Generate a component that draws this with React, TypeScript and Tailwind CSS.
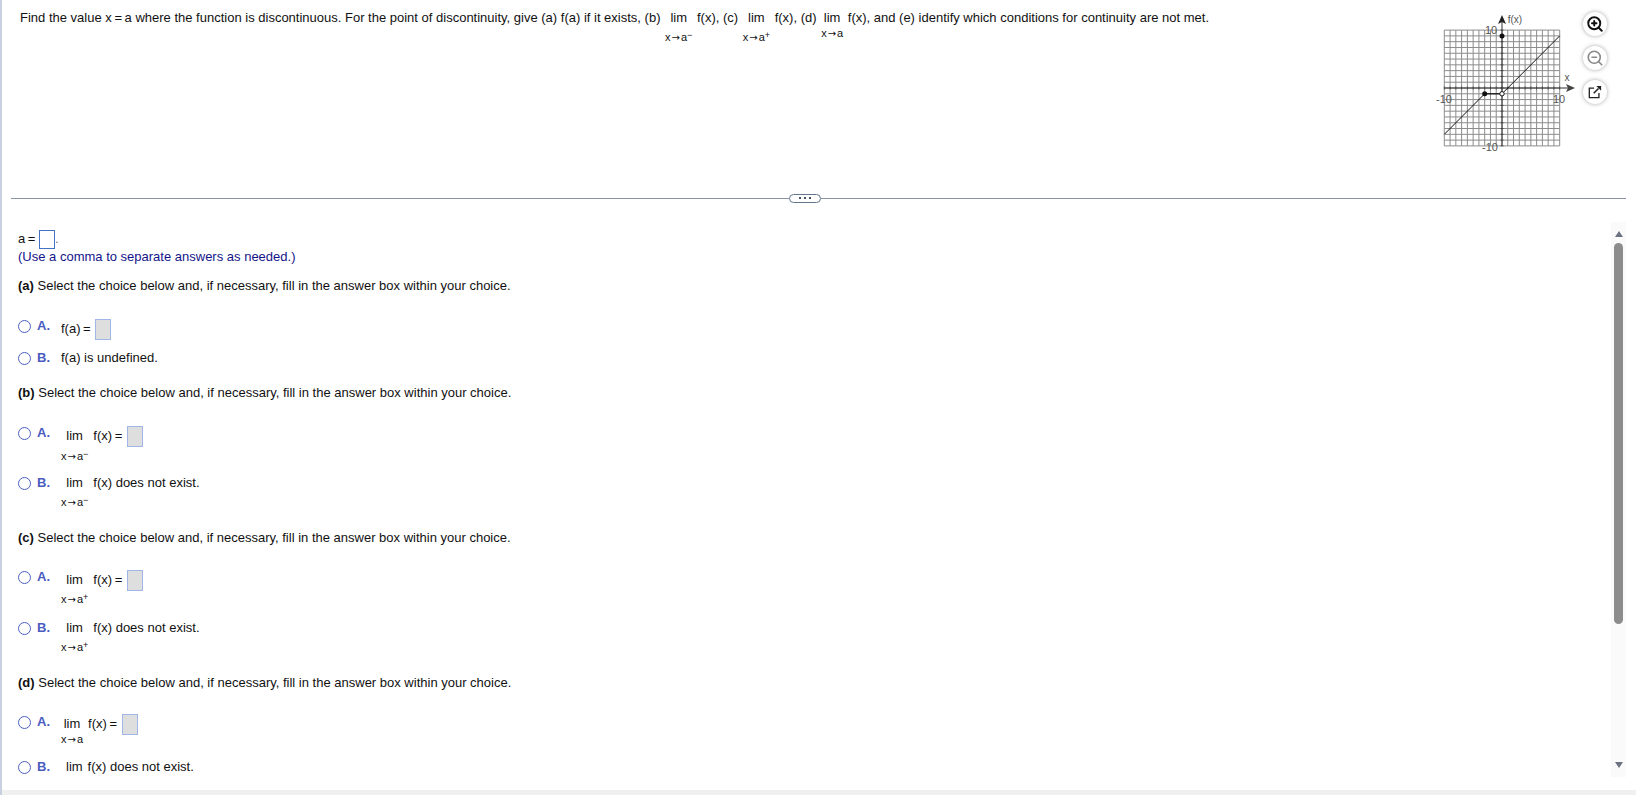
import React from 'react'
import { ZoomIn, ZoomOut } from 'lucide-react'

const cells = Array.from({ length: 21 }, (_, i) => i)
const gx = (v: number) => 1502 + v * 5.77
const gy = (v: number) => 88 - v * 5.79

const Graph = () => (
  <svg viewBox="1420 5 160 155" className="w-[160px] h-[155px] shrink-0 mt-[5px]" fontFamily="'Liberation Sans', Arial, sans-serif">
    {cells.map((i) => (
      <g key={i} stroke="#8c8c8c" strokeWidth="1">
        <line x1={gx(i - 10)} x2={gx(i - 10)} y1={gy(10)} y2={gy(-10)} />
        <line x1={gx(-10)} x2={gx(10)} y1={gy(i - 10)} y2={gy(i - 10)} />
      </g>
    ))}
    <g stroke="#333" strokeWidth="1">
      <line x1={gx(-10)} x2="1570" y1={gy(0)} y2={gy(0)} />
      <line x1={gx(0)} x2={gx(0)} y1="22" y2={gy(-10)} />
      {cells.map((i) => (
        <g key={i} strokeWidth="0.7">
          <line x1={gx(i - 10)} x2={gx(i - 10)} y1={gy(0) - 1.5} y2={gy(0) + 1.5} />
          <line x1={gx(0) - 1.5} x2={gx(0) + 1.5} y1={gy(i - 10)} y2={gy(i - 10)} />
        </g>
      ))}
    </g>
    <path d="M1502 15 L1506 24 L1502 22 L1498 24 Z" fill="#222" />
    <path d="M1575 88 L1566 84 L1568 88 L1566 92 Z" fill="#444" />
    <g stroke="#111" strokeWidth="1" fill="none">
      <line x1={gx(-10)} y1={gy(-8)} x2={gx(-3)} y2={gy(-1)} />
      <line x1={gx(-3)} y1={gy(-1)} x2={gx(0)} y2={gy(-1)} strokeWidth="1.3" />
      <line x1={gx(0)} y1={gy(-1)} x2={gx(10)} y2={gy(9)} />
    </g>
    <circle cx={gx(-3)} cy={gy(-1)} r="2.5" fill="#111" />
    <circle cx={gx(0)} cy={gy(9)} r="2.5" fill="#111" />
    <circle cx={gx(0)} cy={gy(-1)} r="2.2" fill="#fff" stroke="#111" strokeWidth="1" />
    <g fontSize="11" fill="#555">
      <text x="1491" y="34" textAnchor="middle">10</text>
      <text x="1444" y="103" textAnchor="middle">-10</text>
      <text x="1559" y="103" textAnchor="middle">10</text>
      <text x="1490" y="151" textAnchor="middle">-10</text>
      <text x="1567" y="81" textAnchor="middle" fontSize="10">x</text>
      <text x="1515" y="23" textAnchor="middle" fontSize="10">f(x)</text>
    </g>
  </svg>
)

const RoundButton = ({ children }: { children: React.ReactNode }) => (
  <div className="w-[24px] h-[24px] rounded-full bg-white shadow-[0_0_4px_rgba(0,0,0,0.35)] flex items-center justify-center">
    {children}
  </div>
)

const Arrow = () => <span className="font-['DejaVu_Sans',sans-serif] text-[10px] mx-[1px]">→</span>

const TopLim = ({ sign }: { sign?: string }) => (
  <span className="inline-flex flex-col items-center align-baseline mx-[1px]">
    <span className="leading-[16px]">lim</span>
    <span className={`text-[11px] leading-[12px] whitespace-nowrap ${sign ? 'mt-[5px]' : 'mt-[1px]'}`}>
      x<Arrow />a{sign && <sup className="text-[9px] -top-[3px]">{sign}</sup>}
    </span>
  </span>
)

const Lim = ({ sign, subGap }: { sign?: string; subGap: string }) => (
  <span className="flex shrink-0 flex-col items-center">
    <span className="leading-[16px] h-[16px]">lim</span>
    <span className={`text-[11px] leading-[12px] whitespace-nowrap ${subGap}`}>
      x<Arrow />a{sign && <sup className="text-[9px] -top-[3px]">{sign}</sup>}
    </span>
  </span>
)

const Radio = () => <span className="w-[13px] h-[13px] rounded-full border-[1.5px] border-[#4a5fc1] bg-white shrink-0" />

const AnswerBox = () => <span className="inline-block w-[16px] h-[21px] bg-[#dedede] border border-[#9fb6e6] ml-[2px]" />

const Choice = ({ letter, className, children }: { letter: string; className: string; children: React.ReactNode }) => (
  <div className={`flex items-start ${className}`}>
    <div className="flex items-center gap-[6px] h-[16px] w-[43px] shrink-0">
      <Radio />
      <span className="font-bold text-[#4a5cc0]">{letter}.</span>
    </div>
    {children}
  </div>
)

const Part = ({ tag, className }: { tag: string; className: string }) => (
  <p className={`leading-[16px] ${className}`}>
    <b>({tag})</b> Select the choice below and, if necessary, fill in the answer box within your choice.
  </p>
)

const LimChoice = ({ letter, sign, exists, className, subGap, pad }: { letter: string; sign?: string; exists?: boolean; className: string; subGap: string; pad?: string }) => (
  <Choice letter={letter} className={className}>
    <div className={`flex items-start gap-[5px] ${pad ?? ''}`}>
      <Lim sign={sign} subGap={subGap} />
      {exists ? (
        <span className="leading-[16px]">f(x) does not exist.</span>
      ) : (
        <span className="flex items-center h-[16px]">f(x)&thinsp;=&thinsp;<AnswerBox /></span>
      )}
    </div>
  </Choice>
)

export default function App() {
  return (
    <div className="h-screen w-full overflow-hidden flex flex-col bg-white border-l-2 border-[#c9d0e2] text-[#111] font-['Liberation_Sans',Arial,sans-serif]">
      <div className="h-[190px] shrink-0 flex">
        <div className="flex-1 pl-[18px] pt-[10px] text-[13px] leading-[16px]">
          Find the value x&thinsp;=&thinsp;a where the function is discontinuous. For the point of discontinuity, give (a) f(a) if it exists, (b) <TopLim sign="−" /> f(x), (c) <TopLim sign="+" /> f(x), (d) <TopLim /> f(x), and (e) identify which conditions for continuity are not met.
        </div>
        <Graph />
        <div className="w-[24px] ml-[3px] mr-[29px] mt-[12px] flex flex-col gap-[10px] shrink-0">
          <RoundButton><ZoomIn size={18} strokeWidth={2.6} color="#111" /></RoundButton>
          <RoundButton><ZoomOut size={18} strokeWidth={2.2} color="#8a8a8a" /></RoundButton>
          <RoundButton>
            <svg viewBox="0 0 16 16" className="w-[14px] h-[14px]" fill="none">
              <path d="M7 3.5H1.5v11h11V9" stroke="#222" strokeWidth="1.5" />
              <path d="M6.5 9.5 12 4" stroke="#222" strokeWidth="1.8" />
              <path d="M9.5 1H15v5.5Z" fill="#222" />
            </svg>
          </RoundButton>
        </div>
      </div>

      <div className="h-[16px] shrink-0 flex items-center pl-[9px] pr-[10px]">
        <div className="w-[778px] h-px bg-[#8a94a8]" />
        <div className="w-[32px] h-[9px] rounded-full border border-[#64748b] bg-white flex items-center justify-center gap-[3px]">
          <span className="w-[2px] h-[2px] bg-[#475569]" />
          <span className="w-[2px] h-[2px] bg-[#475569]" />
          <span className="w-[2px] h-[2px] bg-[#475569]" />
        </div>
        <div className="flex-1 h-px bg-[#8a94a8]" />
      </div>

      <div className="flex-1 min-h-0 flex">
        <div className="flex-1 min-w-0 overflow-hidden pl-[16px] text-[13px]">
          <div className="flex items-center h-[20px] mt-[23px]">
            a&thinsp;=&thinsp;<span className="w-[16px] h-[19px] border border-[#4472c4] bg-white ml-[1px]" />
            <span className="text-[#777]">.</span>
          </div>
          <p className="leading-[16px] text-[#14148a]">(Use a comma to separate answers as needed.)</p>
          <Part tag="a" className="mt-[13px]" />

          <Choice letter="A" className="mt-[24px] h-[32px]">
            <span className="flex items-center h-[22px]">f(a)&thinsp;=&thinsp;<AnswerBox /></span>
          </Choice>
          <Choice letter="B" className="h-[16px]">
            <span className="leading-[16px]">f(a) is undefined.</span>
          </Choice>

          <Part tag="b" className="mt-[19px]" />
          <LimChoice letter="A" sign="−" pad="pt-[3px]" subGap="mt-[6px]" className="mt-[24px] h-[50px]" />
          <LimChoice letter="B" sign="−" exists subGap="mt-[5px]" className="h-[40px]" />

          <Part tag="c" className="mt-[15px]" />
          <LimChoice letter="A" sign="+" pad="pt-[3px]" subGap="mt-[5px]" className="mt-[23px] h-[51px]" />
          <LimChoice letter="B" sign="+" exists subGap="mt-[5px]" className="h-[40px]" />

          <Part tag="d" className="mt-[15px]" />
          <LimChoice letter="A" pad="pt-[2px]" subGap="mt-[1px]" className="mt-[23px] h-[45px]" />
          <Choice letter="B" className="h-[16px]">
            <span className="flex gap-[5px] leading-[16px]"><span className="ml-[5px]">lim</span> f(x) does not exist.</span>
          </Choice>
        </div>

        <div className="w-[15px] mr-[10px] mt-[16px] mb-[13px] bg-[#fafafa] flex flex-col items-center shrink-0">
          <span className="mt-[9px] w-0 h-0 border-l-[4.5px] border-r-[4.5px] border-b-[6px] border-l-transparent border-r-transparent border-b-[#6b7280]" />
          <div className="w-[9px] h-[381px] mt-[6px] rounded-full bg-[#8c8c8c]" />
          <span className="mt-auto mb-[9px] w-0 h-0 border-l-[4.5px] border-r-[4.5px] border-t-[6px] border-l-transparent border-r-transparent border-t-[#6b7280]" />
        </div>
      </div>

      <div className="h-[5px] shrink-0 bg-[#f0f0f0]" />
    </div>
  )
}
